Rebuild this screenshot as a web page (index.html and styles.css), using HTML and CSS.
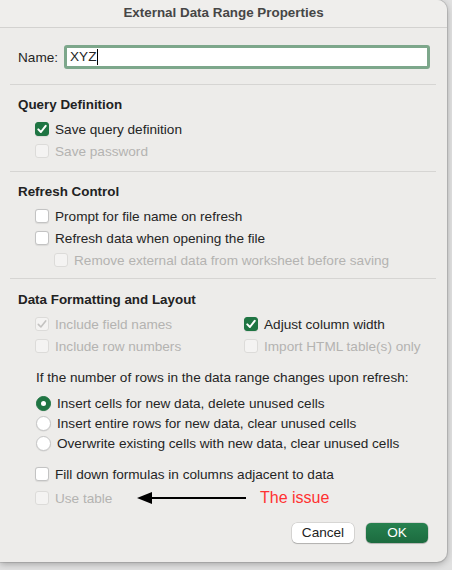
FILE: index.html
```html
<!DOCTYPE html>
<html>
<head>
<meta charset="utf-8">
<link rel="stylesheet" href="styles.css">
</head>
<body>
<div class="dialog">
  <div class="titlebar">External Data Range Properties</div>
  <div class="content">
    <div class="name-row">
      <span class="name-label">Name:</span>
      <div class="input">XYZ<span class="caret"></span></div>
    </div>
    <div class="sep"></div>

    <section class="group g-query">
      <h2 class="group-title">Query Definition</h2>
      <div class="row"><span class="cb checked"><svg viewBox="0 0 14 14"><path d="M3.3 7.4 L5.9 10 L10.7 3.9" /></svg></span><span>Save query definition</span></div>
      <div class="row disabled"><span class="cb"></span><span>Save password</span></div>
    </section>
    <div class="sep"></div>

    <section class="group g-refresh">
      <h2 class="group-title">Refresh Control</h2>
      <div class="row"><span class="cb"></span><span>Prompt for file name on refresh</span></div>
      <div class="row"><span class="cb"></span><span>Refresh data when opening the file</span></div>
      <div class="row nested disabled"><span class="cb"></span><span>Remove external data from worksheet before saving</span></div>
    </section>
    <div class="sep"></div>

    <section class="group g-data">
      <h2 class="group-title">Data Formatting and Layout</h2>
      <div class="cols">
        <div class="row disabled"><span class="cb checked-dis"><svg viewBox="0 0 14 14"><path d="M3.3 7.4 L5.9 10 L10.7 3.9" /></svg></span><span>Include field names</span></div>
        <div class="row"><span class="cb checked"><svg viewBox="0 0 14 14"><path d="M3.3 7.4 L5.9 10 L10.7 3.9" /></svg></span><span>Adjust column width</span></div>
        <div class="row disabled"><span class="cb"></span><span>Include row numbers</span></div>
        <div class="row disabled"><span class="cb"></span><span>Import HTML table(s) only</span></div>
      </div>
      <p class="question">If the number of rows in the data range changes upon refresh:</p>
      <div class="radios">
        <div class="rrow"><span class="radio on"></span><span>Insert cells for new data, delete unused cells</span></div>
        <div class="rrow"><span class="radio"></span><span>Insert entire rows for new data, clear unused cells</span></div>
        <div class="rrow"><span class="radio"></span><span>Overwrite existing cells with new data, clear unused cells</span></div>
      </div>
      <div class="extra">
        <div class="row tall"><span class="cb"></span><span>Fill down formulas in columns adjacent to data</span></div>
        <div class="row tall disabled"><span class="cb"></span><span class="use-label">Use table</span>
          <svg class="arrow" viewBox="0 0 110 14"><path class="arrow-line" d="M12 7 H109" /><path class="arrow-head" d="M0 7 L15 1 L15 13 Z" /></svg>
          <span class="issue">The issue</span>
        </div>
      </div>
    </section>

    <div class="buttons">
      <button class="btn cancel">Cancel</button>
      <button class="btn ok">OK</button>
    </div>
  </div>
</div>
</body>
</html>
```

FILE: styles.css
```css
* { box-sizing: border-box; }
html, body { margin: 0; padding: 0; }
body {
  width: 452px;
  height: 570px;
  background: #e1e1e1;
  font-family: "Liberation Sans", Arial, sans-serif;
  font-size: 13.6px;
  color: #252525;
  overflow: hidden;
}
.dialog {
  width: 447px;
  height: 562px;
  background: #edecea;
  border-radius: 0 10px 10px 0;
  box-shadow: 0 0 0 1px rgba(0,0,0,0.10), 0 2px 7px rgba(0,0,0,0.28);
  overflow: hidden;
}
.titlebar {
  height: 28px;
  border-bottom: 1px solid #d3d2d0;
  background: #efeeec;
  text-align: center;
  font-weight: bold;
  font-size: 13.4px;
  color: #464646;
  line-height: 25px;
}
.content {
  padding: 17px 11px 20px 10px;
}
.name-row {
  display: flex;
  align-items: center;
  height: 24px;
  padding-left: 8px;
}
.name-label {
  width: 46px;
  padding-top: 1px;
}
.input {
  width: 366px;
  height: 24px;
  background: #fff;
  border: 3px solid #7da78b;
  border-radius: 3px;
  padding-left: 3px;
  display: flex;
  align-items: center;
  line-height: 16px;
}
.caret {
  display: inline-block;
  width: 1px;
  height: 16px;
  background: #000;
  margin-left: 1px;
}
.sep {
  height: 1px;
  background: #d6d5d3;
}
.name-row + .sep { margin-top: 15px; }
.group { padding-top: 11px; }
.g-query { padding-bottom: 9px; }
.g-refresh { padding-bottom: 7px; }
.g-data { padding-top: 12px; }
.group-title {
  margin: 0 0 4px 8px;
  font-size: 13.4px;
  line-height: 18px;
  font-weight: bold;
  color: #222;
}
.row {
  display: flex;
  align-items: center;
  height: 22px;
  padding-left: 25px;
}
.row.tall { height: 24px; }
.row.nested { padding-left: 44px; }
.cb {
  width: 14px;
  height: 14px;
  border-radius: 3px;
  background: #fff;
  border: 1px solid #c3c3c3;
  box-shadow: 0 0.5px 1px rgba(0,0,0,0.08);
  margin-right: 6px;
  flex: none;
  display: flex;
}
.cb svg { width: 14px; height: 14px; margin: -1px; }
.cb svg path { fill: none; stroke: #fff; stroke-width: 2; stroke-linecap: round; stroke-linejoin: round; }
.cb.checked { background: #1f7543; border-color: #1f7543; }
.disabled { color: #b4b3b1; }
.disabled .cb { background: #f4f3f2; border-color: #dcdbd9; box-shadow: none; }
.disabled .cb.checked-dis svg path { stroke: #c3c2c0; stroke-width: 1.6; }
.cols {
  display: grid;
  grid-template-columns: 234px 1fr;
}
.cols .row:nth-child(even) { padding-left: 0; }
.question {
  margin: 10px 0 4px 26px;
  line-height: 22px;
}
.rrow {
  display: flex;
  align-items: center;
  height: 20px;
  padding-left: 26px;
}
.radio {
  width: 15px;
  height: 15px;
  border-radius: 50%;
  background: #fff;
  border: 1px solid #c6c6c6;
  box-shadow: 0 0.5px 1px rgba(0,0,0,0.1);
  margin-right: 6px;
  flex: none;
  display: flex;
  align-items: center;
  justify-content: center;
}
.radio.on { background: #1f7543; border-color: #1f7543; }
.radio.on::after {
  content: "";
  width: 5px;
  height: 5px;
  border-radius: 50%;
  background: #fff;
}
.extra { margin-top: 9px; }
.use-label { width: 82px; flex: none; }
.arrow {
  width: 110px;
  height: 14px;
  flex: none;
}
.arrow-line { stroke: #000; stroke-width: 2; fill: none; }
.arrow-head { fill: #000; }
.issue {
  margin-left: 13px;
  font-size: 16px;
  color: #ff3131;
}
.buttons {
  display: flex;
  justify-content: flex-end;
  gap: 12px;
  margin-top: 13px;
  padding-right: 8px;
}
.btn {
  width: 62px;
  height: 20px;
  border: none;
  border-radius: 5px;
  font-family: "Liberation Sans", Arial, sans-serif;
  font-size: 13.6px;
  padding: 0;
  line-height: 20px;
}
.cancel {
  background: #fff;
  color: #222;
  box-shadow: 0 0 0 0.5px rgba(0,0,0,0.18), 0 1px 1px rgba(0,0,0,0.18);
}
.ok {
  background: linear-gradient(#27814f, #1c6b3f);
  color: #fff;
  box-shadow: 0 0 0 0.5px rgba(0,0,0,0.2), 0 1px 1px rgba(0,0,0,0.15);
}
```
